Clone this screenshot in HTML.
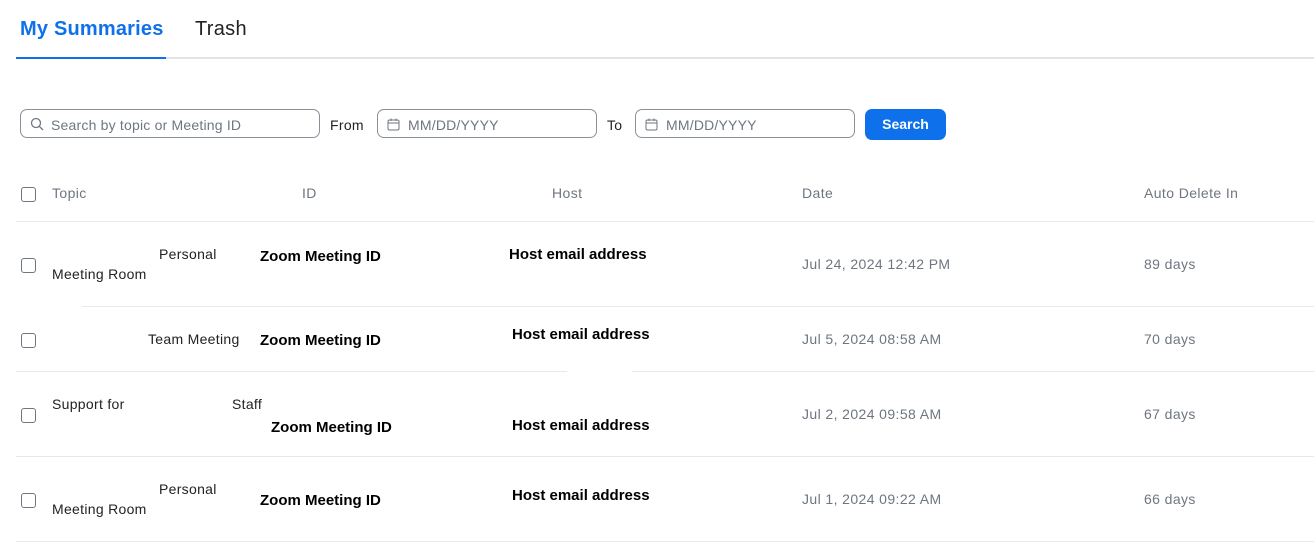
<!DOCTYPE html>
<html><head><style>
body{margin:0;width:1314px;height:557px;background:#fff;font-family:"Liberation Sans",Arial,sans-serif;position:relative;overflow:hidden}
.a{position:absolute;white-space:nowrap}
.g{color:#6e7680;font-size:14px;letter-spacing:0.4px}
.d{color:#222;font-size:14px;letter-spacing:0.3px}
.b{color:#000;font-size:15px;font-weight:bold}
.cb{position:absolute;width:13px;height:13px;border:1px solid #6e7680;border-radius:3px;left:21px}
.ln{position:absolute;left:16px;right:0;height:1px;background:#e6e8eb}
.in{position:absolute;height:29px;border:1px solid #8a9099;border-radius:7px;top:109px;box-sizing:border-box}
.ph{position:absolute;top:7px;font-size:14px;color:#6e7680;letter-spacing:0.2px}
</style></head><body>
<div class="a" style="left:20px;top:18px;font-size:20px;color:#0e71eb;font-weight:bold;letter-spacing:0.2px">My Summaries</div>
<div class="a" style="left:195px;top:18px;font-size:20px;color:#222;letter-spacing:0.3px">Trash</div>
<div style="position:absolute;left:16px;right:0;top:57px;height:2px;background:#e2e4e8"></div>
<div style="position:absolute;left:16px;width:150px;top:57px;height:2px;background:#0e71eb"></div>

<div class="in" style="left:20px;width:300px"><svg style="position:absolute;left:9px;top:7px" width="14" height="14" viewBox="0 0 14 14"><circle cx="6" cy="6" r="4.5" fill="none" stroke="#6e7680" stroke-width="1.3"/><line x1="9.3" y1="9.3" x2="13" y2="13" stroke="#6e7680" stroke-width="1.3"/></svg><span class="ph" style="left:30px">Search by topic or Meeting ID</span></div>
<div class="a d" style="left:330px;top:117px">From</div>
<div class="in" style="left:377px;width:220px"><svg style="position:absolute;left:9px;top:8px" width="13" height="13" viewBox="0 0 13 13"><rect x="1" y="2" width="11" height="10" rx="1.5" fill="none" stroke="#6e7680"/><line x1="1" y1="5" x2="12" y2="5" stroke="#6e7680"/><line x1="4" y1="0.5" x2="4" y2="3" stroke="#6e7680"/><line x1="9" y1="0.5" x2="9" y2="3" stroke="#6e7680"/></svg><span class="ph" style="left:30px">MM/DD/YYYY</span></div>
<div class="a d" style="left:607px;top:117px">To</div>
<div class="in" style="left:635px;width:220px"><svg style="position:absolute;left:9px;top:8px" width="13" height="13" viewBox="0 0 13 13"><rect x="1" y="2" width="11" height="10" rx="1.5" fill="none" stroke="#6e7680"/><line x1="1" y1="5" x2="12" y2="5" stroke="#6e7680"/><line x1="4" y1="0.5" x2="4" y2="3" stroke="#6e7680"/><line x1="9" y1="0.5" x2="9" y2="3" stroke="#6e7680"/></svg><span class="ph" style="left:30px">MM/DD/YYYY</span></div>
<div style="position:absolute;left:865px;top:109px;width:81px;height:31px;background:#0e71eb;border-radius:7px;color:#fff;font-size:14px;font-weight:bold;text-align:center;line-height:31px">Search</div>

<div class="cb" style="top:187px"></div>
<div class="a g" style="left:52px;top:185px">Topic</div>
<div class="a g" style="left:302px;top:185px">ID</div>
<div class="a g" style="left:552px;top:185px">Host</div>
<div class="a g" style="left:802px;top:185px">Date</div>
<div class="a g" style="left:1144px;top:185px">Auto Delete In</div>
<div class="ln" style="top:221px"></div>

<div class="cb" style="top:258px"></div>
<div class="a d" style="left:159px;top:246px">Personal</div>
<div class="a d" style="left:52px;top:266px">Meeting Room</div>
<div class="a b" style="left:260px;top:248px">Zoom Meeting ID</div>
<div class="a b" style="left:509px;top:246px">Host email address</div>
<div class="a g" style="left:802px;top:256px">Jul 24, 2024 12:42 PM</div>
<div class="a g" style="left:1144px;top:256px">89 days</div>
<div class="ln" style="top:306px;left:82px"></div>

<div class="cb" style="top:333px"></div>
<div class="a d" style="left:148px;top:331px">Team Meeting</div>
<div class="a b" style="left:260px;top:332px">Zoom Meeting ID</div>
<div class="a b" style="left:512px;top:326px">Host email address</div>
<div class="a g" style="left:802px;top:331px">Jul 5, 2024 08:58 AM</div>
<div class="a g" style="left:1144px;top:331px">70 days</div>
<div class="ln" style="top:371px;right:747px"></div>
<div class="ln" style="top:371px;left:632px"></div>

<div class="cb" style="top:408px"></div>
<div class="a d" style="left:52px;top:396px">Support for</div>
<div class="a d" style="left:232px;top:396px">Staff</div>
<div class="a b" style="left:271px;top:419px">Zoom Meeting ID</div>
<div class="a b" style="left:512px;top:417px">Host email address</div>
<div class="a g" style="left:802px;top:406px">Jul 2, 2024 09:58 AM</div>
<div class="a g" style="left:1144px;top:406px">67 days</div>
<div class="ln" style="top:456px"></div>

<div class="cb" style="top:493px"></div>
<div class="a d" style="left:159px;top:481px">Personal</div>
<div class="a d" style="left:52px;top:501px">Meeting Room</div>
<div class="a b" style="left:260px;top:492px">Zoom Meeting ID</div>
<div class="a b" style="left:512px;top:487px">Host email address</div>
<div class="a g" style="left:802px;top:491px">Jul 1, 2024 09:22 AM</div>
<div class="a g" style="left:1144px;top:491px">66 days</div>
<div class="ln" style="top:541px"></div>
</body></html>
